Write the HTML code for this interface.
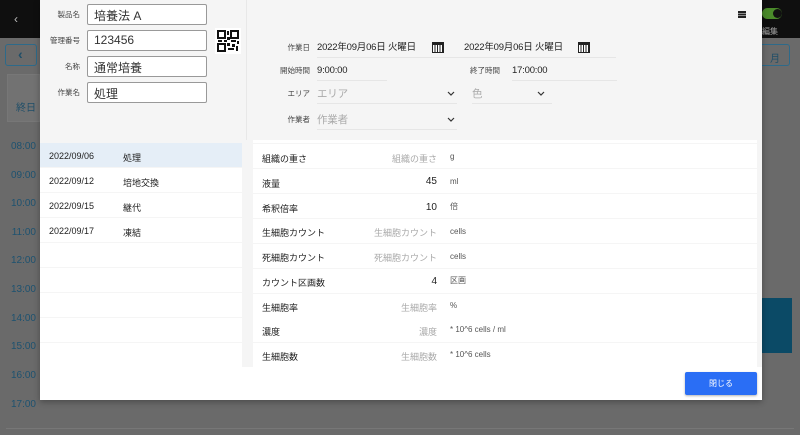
<!DOCTYPE html>
<html style="background:#6a6a6a"><head><meta charset="utf-8">
<style>
*{box-sizing:border-box;margin:0;padding:0}
html,body{width:800px;height:435px;overflow:hidden;background:#6a6a6a}
body{font-family:"Liberation Sans","Noto Sans CJK JP",sans-serif;position:relative;color:#222}
.abs{position:absolute}
.bg{left:0;top:0;width:800px;height:435px;background:#6a6a6a}
.top{left:0;top:0;width:800px;height:38px;background:#0f0f0f}
.time{left:4px;width:32px;text-align:right;font-size:10px;color:#1d5270}
.modal{left:40px;top:0;width:722px;height:400px;background:#fff;box-shadow:0 2px 6px rgba(0,0,0,.3)}
.head{left:0;top:0;width:722px;height:140px;background:#f5f5f5}
.lbl{font-size:7.5px;color:#444;text-align:right;line-height:18px}
.inp{background:#fff;border:1px solid #999;border-radius:2px;height:21px;font-size:12px;padding:2px 6px;color:#333}
.fv{font-size:9.5px;color:#222;line-height:18px;letter-spacing:-0.2px}
.ul{border-bottom:1px solid #e6e6e6}
.ph{color:#aaa}
.row{left:0;width:202px;height:24px;background:#fff;font-size:9px;color:#222}
.trow{left:213px;width:504px;height:24px;background:#fff;font-size:9px;color:#222}
.cal{width:12px;height:11px;border:1.5px solid #222;border-top-width:3px;background:repeating-linear-gradient(90deg,#fff 0 1.5px,#222 1.5px 2.5px)}
</style></head><body>
<div class="abs bg"></div>
<div class="abs top"></div>
<div class="abs" style="left:14px;top:12px;color:#bbb;font-size:12px">&lsaquo;</div>
<div class="abs" style="left:5px;top:44px;width:32px;height:22px;border:1px solid #2d6a8a;border-radius:3px"></div>
<div class="abs" style="left:18px;top:46px;color:#1f4e68;font-size:14px;font-weight:bold">&lsaquo;</div>
<div class="abs" style="left:7px;top:74px;width:33px;height:48px;border:1px solid #777;background:#727272"></div>
<div class="abs" style="left:16px;top:99px;font-size:10px;color:#1f4e68">終日</div>
<div class="abs time" style="top:141px">08:00</div>
<div class="abs time" style="top:170px">09:00</div>
<div class="abs time" style="top:198px">10:00</div>
<div class="abs time" style="top:227px">11:00</div>
<div class="abs time" style="top:255px">12:00</div>
<div class="abs time" style="top:284px">13:00</div>
<div class="abs time" style="top:313px">14:00</div>
<div class="abs time" style="top:341px">15:00</div>
<div class="abs time" style="top:370px">16:00</div>
<div class="abs time" style="top:399px">17:00</div>
<div class="abs" style="left:6px;top:428px;width:788px;height:1px;background:#777"></div>
<div class="abs" style="left:762px;top:8px;width:20px;height:11px;border-radius:6px;background:#4a8a2a"></div>
<div class="abs" style="left:773px;top:9px;width:9px;height:9px;border-radius:5px;background:#111"></div>
<div class="abs" style="left:762px;top:26px;font-size:8px;color:#aaa">編集</div>
<div class="abs" style="left:750px;top:44px;width:40px;height:22px;border:1px solid #2d6a8a;border-radius:3px"></div>
<div class="abs" style="left:770px;top:50px;font-size:10px;color:#1f4e68">月</div>
<div class="abs" style="left:762px;top:298px;width:30px;height:55px;background:#0b4a66"></div>

<div class="abs modal">
 <div class="abs head"></div>
 <div class="abs" style="left:206px;top:0;width:1px;height:140px;background:#e8e8e8"></div>
 <div class="abs lbl" style="left:0;top:6px;width:40px">製品名</div>
 <div class="abs inp" style="left:47px;top:4px;width:120px">培養法 A</div>
 <div class="abs lbl" style="left:0;top:32px;width:40px">管理番号</div>
 <div class="abs inp" style="left:47px;top:30px;width:120px">123456</div>
 <div class="abs lbl" style="left:0;top:58px;width:40px">名称</div>
 <div class="abs inp" style="left:47px;top:56px;width:120px">通常培養</div>
 <div class="abs lbl" style="left:0;top:84px;width:40px">作業名</div>
 <div class="abs inp" style="left:47px;top:82px;width:120px">処理</div>
 <svg class="abs" style="left:175px;top:28px" width="26" height="26" viewBox="0 0 26 26">
  <rect width="26" height="26" fill="#fff"/>
  <g fill="none" stroke="#111" stroke-width="2"><rect x="3" y="3" width="7" height="7"/><rect x="16" y="3" width="7" height="7"/><rect x="3" y="16" width="7" height="7"/></g>
  <g fill="#111"><rect x="12" y="3" width="2" height="4"/><rect x="12" y="9" width="3" height="3"/><rect x="3" y="12" width="4" height="2"/><rect x="9" y="12" width="3" height="2"/><rect x="16" y="12" width="5" height="2"/><rect x="12" y="15" width="3" height="3"/><rect x="17" y="16" width="3" height="3"/><rect x="21" y="18" width="2" height="5"/><rect x="13" y="20" width="6" height="2"/><rect x="22" y="13" width="2" height="3"/></g>
 </svg>
 <div class="abs" style="left:698px;top:11px;width:8px;height:1.5px;background:#222;box-shadow:0 2.5px 0 #222,0 5px 0 #222"></div>

 <div class="abs lbl" style="left:230px;top:39px;width:40px">作業日</div>
 <div class="abs fv ul" style="left:277px;top:39px;width:160px;height:19px">2022年09月06日 火曜日</div>
 <div class="abs cal" style="left:392px;top:42px"></div>
 <div class="abs fv ul" style="left:424px;top:39px;width:152px;height:19px">2022年09月06日 火曜日</div>
 <div class="abs cal" style="left:538px;top:42px"></div>
 <div class="abs lbl" style="left:230px;top:62px;width:40px">開始時間</div>
 <div class="abs fv ul" style="left:277px;top:62px;width:70px;height:19px">9:00:00</div>
 <div class="abs lbl" style="left:420px;top:62px;width:40px">終了時間</div>
 <div class="abs fv ul" style="left:472px;top:62px;width:105px;height:19px">17:00:00</div>
 <div class="abs lbl" style="left:230px;top:85px;width:40px">エリア</div>
 <div class="abs fv ul ph" style="left:277px;top:85px;width:140px;height:19px;font-size:10.5px">エリア</div>
 <svg class="abs" style="left:407px;top:91px" width="8" height="6"><path d="M1 1 L4 4 L7 1" fill="none" stroke="#333" stroke-width="1.2"/></svg>
 <div class="abs fv ul ph" style="left:432px;top:85px;width:80px;height:19px;font-size:10.5px">色</div>
 <svg class="abs" style="left:497px;top:91px" width="8" height="6"><path d="M1 1 L4 4 L7 1" fill="none" stroke="#333" stroke-width="1.2"/></svg>
 <div class="abs lbl" style="left:230px;top:111px;width:40px">作業者</div>
 <div class="abs fv ul ph" style="left:277px;top:111px;width:140px;height:19px;font-size:10.5px">作業者</div>
 <svg class="abs" style="left:407px;top:117px" width="8" height="6"><path d="M1 1 L4 4 L7 1" fill="none" stroke="#333" stroke-width="1.2"/></svg>

 <div class="abs" style="left:0;top:140px;width:722px;height:227px;background:#f5f5f5"></div>
 <div class="abs row" style="top:143px;background:#e5eef7"><span class="abs" style="left:9px;top:8px">2022/09/06</span><span class="abs" style="left:83px;top:8px">処理</span></div>
 <div class="abs row" style="top:168px"><span class="abs" style="left:9px;top:8px">2022/09/12</span><span class="abs" style="left:83px;top:8px">培地交換</span></div>
 <div class="abs row" style="top:193px"><span class="abs" style="left:9px;top:8px">2022/09/15</span><span class="abs" style="left:83px;top:8px">継代</span></div>
 <div class="abs row" style="top:218px"><span class="abs" style="left:9px;top:8px">2022/09/17</span><span class="abs" style="left:83px;top:8px">凍結</span></div>
 <div class="abs row" style="top:243px"></div>
 <div class="abs row" style="top:268px"></div>
 <div class="abs row" style="top:293px"></div>
 <div class="abs row" style="top:318px"></div>
 <div class="abs row" style="top:343px"></div>

 <div class="abs trow" style="top:140px;height:3px"></div>
 <div class="abs trow" style="top:144px"><span class="abs" style="left:9px;top:8px">組織の重さ</span><span class="abs ph" style="right:320px;top:8px">組織の重さ</span><span class="abs" style="left:197px;top:8px;font-size:8px;color:#555">g</span></div>
 <div class="abs trow" style="top:169px"><span class="abs" style="left:9px;top:8px">液量</span><span class="abs" style="right:320px;top:7px;font-size:10px">45</span><span class="abs" style="left:197px;top:8px;font-size:8px;color:#555">ml</span></div>
 <div class="abs trow" style="top:194px"><span class="abs" style="left:9px;top:8px">希釈倍率</span><span class="abs" style="right:320px;top:8px;font-size:10px">10</span><span class="abs" style="left:197px;top:7px;font-size:8px;color:#555">倍</span></div>
 <div class="abs trow" style="top:219px"><span class="abs" style="left:9px;top:7px">生細胞カウント</span><span class="abs ph" style="right:320px;top:7px">生細胞カウント</span><span class="abs" style="left:197px;top:8px;font-size:8px;color:#555">cells</span></div>
 <div class="abs trow" style="top:244px"><span class="abs" style="left:9px;top:7px">死細胞カウント</span><span class="abs ph" style="right:320px;top:7px">死細胞カウント</span><span class="abs" style="left:197px;top:8px;font-size:8px;color:#555">cells</span></div>
 <div class="abs trow" style="top:269px"><span class="abs" style="left:9px;top:7px">カウント区画数</span><span class="abs" style="right:320px;top:7px;font-size:10px">4</span><span class="abs" style="left:197px;top:6px;font-size:8px;color:#555">区画</span></div>
 <div class="abs trow" style="top:294px"><span class="abs" style="left:9px;top:7px">生細胞率</span><span class="abs ph" style="right:320px;top:7px">生細胞率</span><span class="abs" style="left:197px;top:7px;font-size:8px;color:#555">%</span></div>
 <div class="abs trow" style="top:318px"><span class="abs" style="left:9px;top:7px">濃度</span><span class="abs ph" style="right:320px;top:7px">濃度</span><span class="abs" style="left:197px;top:7px;font-size:8px;color:#555">* 10^6 cells / ml</span></div>
 <div class="abs trow" style="top:343px"><span class="abs" style="left:9px;top:7px">生細胞数</span><span class="abs ph" style="right:320px;top:7px">生細胞数</span><span class="abs" style="left:197px;top:7px;font-size:8px;color:#555">* 10^6 cells</span></div>

 <div class="abs" style="left:645px;top:372px;width:72px;height:23px;background:#2a6ef5;border-radius:2px;color:#fff;font-size:8px;text-align:center;line-height:23px;box-shadow:0 1px 2px rgba(0,0,0,.3)">閉じる</div>
</div>
</body></html>
